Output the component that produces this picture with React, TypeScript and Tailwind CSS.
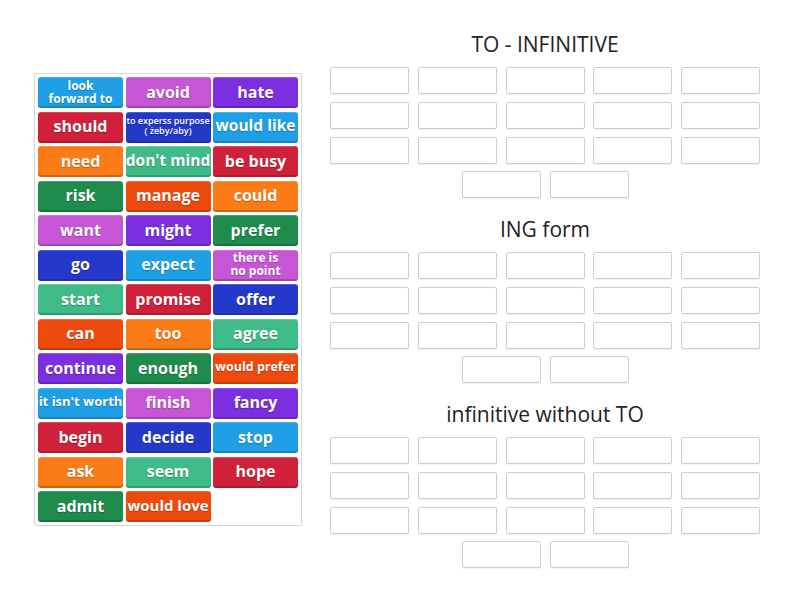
type Tile = { text: string; color: string; size?: string };

const LB = 'bg-[#1e9fe6]';
const MG = 'bg-[#c656d6]';
const PU = 'bg-[#7b2fe0]';
const RD = 'bg-[#d12039]';
const DB = 'bg-[#2438c9]';
const OR = 'bg-[#fb7b16]';
const TL = 'bg-[#3fbb88]';
const DG = 'bg-[#1f8b4c]';
const RO = 'bg-[#ee4a0e]';

const tiles: Tile[] = [
  { text: 'look\nforward to', color: LB, size: 'text-[12px] leading-[13px]' },
  { text: 'avoid', color: MG },
  { text: 'hate', color: PU },
  { text: 'should', color: RD },
  { text: 'to experss purpose\n( żeby/aby)', color: DB, size: 'text-[9px] leading-[10px] font-semibold' },
  { text: 'would like', color: LB, size: 'text-[15.5px]' },
  { text: 'need', color: OR },
  { text: "don't mind", color: TL, size: 'text-[15.5px]' },
  { text: 'be busy', color: RD },
  { text: 'risk', color: DG },
  { text: 'manage', color: RO },
  { text: 'could', color: OR },
  { text: 'want', color: MG },
  { text: 'might', color: PU },
  { text: 'prefer', color: DG },
  { text: 'go', color: DB },
  { text: 'expect', color: LB },
  { text: 'there is\nno point', color: MG, size: 'text-[12px] leading-[13px]' },
  { text: 'start', color: TL },
  { text: 'promise', color: RD },
  { text: 'offer', color: DB },
  { text: 'can', color: RO },
  { text: 'too', color: OR },
  { text: 'agree', color: TL },
  { text: 'continue', color: PU },
  { text: 'enough', color: DG },
  { text: 'would prefer', color: RO, size: 'text-[12.5px]' },
  { text: "it isn't worth", color: LB, size: 'text-[13px]' },
  { text: 'finish', color: MG },
  { text: 'fancy', color: PU },
  { text: 'begin', color: RD },
  { text: 'decide', color: DB },
  { text: 'stop', color: LB },
  { text: 'ask', color: OR },
  { text: 'seem', color: TL },
  { text: 'hope', color: RD },
  { text: 'admit', color: DG },
  { text: 'would love', color: RO, size: 'text-[15px]' },
];

const sections = ['TO - INFINITIVE', 'ING form', 'infinitive without TO'];

function Slot() {
  return (
    <div className="h-[27px] w-[79px] rounded-[2px] border border-[#cdcdcd] bg-white shadow-[0_1px_1px_rgba(0,0,0,0.06)]" />
  );
}

export default function App() {
  return (
    <div
      className="flex h-[600px] w-[800px] bg-white pl-[34px]"
      style={{ fontFamily: '"Open Sans", "Noto Sans", sans-serif' }}
    >
      {/* Word bank */}
      <div className="mt-[73px] h-[453px] w-[268px] rounded-[2px] border border-[#d6d6d6] bg-white px-[3px] pt-[3px]">
        <div className="grid grid-cols-[85px_85px_85px] gap-x-[2.5px] gap-y-[3.5px]">
          {tiles.map((t) => (
            <div
              key={t.text}
              className={`flex h-[31px] items-center justify-center whitespace-pre-line rounded-[3px] pb-[2px] text-center font-bold text-white shadow-[inset_0_1px_0_rgba(255,255,255,0.18),inset_0_-2px_0_rgba(0,0,0,0.18)] [text-shadow:0_1px_1px_rgba(0,0,0,0.25)] ${t.color} ${t.size ?? 'text-[16px] leading-[20px]'}`}
            >
              {t.text}
            </div>
          ))}
        </div>
      </div>

      {/* Drop targets */}
      <div className="ml-[28px] flex w-[430px] flex-col pt-[30px]">
        {sections.map((title) => (
          <div key={title} className="mb-[16.6px] flex flex-col">
            <div className="h-[28px] text-center text-[21px] leading-[28px] text-[#222]">{title}</div>
            <div className="mt-[9px] flex flex-col gap-[7.8px]">
              {[0, 1, 2].map((r) => (
                <div key={r} className="flex justify-between">
                  <Slot />
                  <Slot />
                  <Slot />
                  <Slot />
                  <Slot />
                </div>
              ))}
              <div className="flex justify-center gap-[9px]">
                <Slot />
                <Slot />
              </div>
            </div>
          </div>
        ))}
      </div>
    </div>
  );
}
